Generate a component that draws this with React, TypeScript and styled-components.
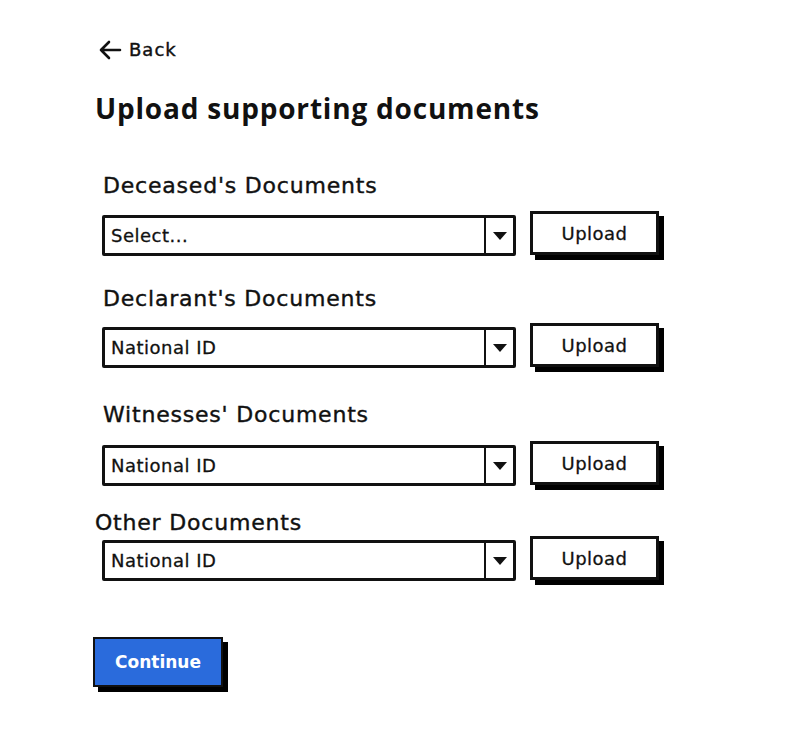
import styled, { createGlobalStyle } from "styled-components";

const GlobalStyle = createGlobalStyle`
  body {
    margin: 0;
    background: #ffffff;
    font-family: "DejaVu Sans", "Open Sans", sans-serif;
    color: #111111;
  }
`;

type DocSection = {
  label: string;
  value: string;
  top: number;
  gap: number;
  indent: number;
};

const SECTIONS: Array<DocSection> = [
  { label: "Deceased's Documents", value: "Select...", top: 50, gap: 13, indent: 10 },
  { label: "Declarant's Documents", value: "National ID", top: 32, gap: 12, indent: 10 },
  { label: "Witnesses' Documents", value: "National ID", top: 36, gap: 14, indent: 10 },
  { label: "Other Documents", value: "National ID", top: 26, gap: 1, indent: 2 },
];

const App = () => {
  return (
    <>
      <GlobalStyle />
      <Page>
        <BackLink>
          <svg width="24" height="20" viewBox="0 0 24 20" fill="none">
            <path
              d="M22 10H3M11 2L3 10L11 18"
              stroke="#111"
              strokeWidth="2.6"
              strokeLinecap="round"
              strokeLinejoin="round"
            />
          </svg>
          Back
        </BackLink>
        <Title>Upload supporting documents</Title>
        {SECTIONS.map((section, index) => (
          <Section key={index} top={section.top}>
            <Label indent={section.indent} gap={section.gap}>
              {section.label}
            </Label>
            <Row>
              <Select>
                <SelectValue>{section.value}</SelectValue>
                <Caret>
                  <svg width="14" height="8" viewBox="0 0 14 8">
                    <path d="M0 0H14L7 8Z" fill="#111" />
                  </svg>
                </Caret>
              </Select>
              <UploadButton>Upload</UploadButton>
            </Row>
          </Section>
        ))}
        <ContinueButton>Continue</ContinueButton>
      </Page>
    </>
  );
};

export default App;

const Page = styled.div`
  display: flex;
  flex-direction: column;
  align-items: flex-start;
  padding: 39px 0 60px 93px;
`;

const BackLink = styled.div`
  display: flex;
  align-items: center;
  gap: 7px;
  margin-left: 5px;
  font-size: 18px;
  line-height: 22px;
  letter-spacing: 1px;
  -webkit-text-stroke: 0.4px #111;
`;

const Title = styled.h1`
  margin: 31px 0 0 2px;
  font-family: "Open Sans", sans-serif;
  font-size: 28px;
  line-height: 32px;
  font-weight: 700;
  letter-spacing: 0.8px;
`;

const Section = styled.div<{ top: number }>`
  display: flex;
  flex-direction: column;
  margin-top: ${({ top }) => `${top}px`};
`;

const Label = styled.div<{ indent: number; gap: number }>`
  margin-left: ${({ indent }) => `${indent}px`};
  margin-bottom: ${({ gap }) => `${gap}px`};
  font-size: 22px;
  line-height: 24px;
  letter-spacing: 0.8px;
  -webkit-text-stroke: 0.4px #111;
`;

const Row = styled.div`
  display: flex;
  align-items: flex-start;
  gap: 14px;
  height: 44px;
  margin-left: 9px;
`;

const Select = styled.div`
  display: flex;
  align-items: stretch;
  box-sizing: border-box;
  width: 414px;
  height: 41px;
  margin-top: 4px;
  border: 3px solid #111;
  border-radius: 2px;
  background: #fff;
`;

const SelectValue = styled.div`
  flex: 1;
  display: flex;
  align-items: center;
  padding-left: 6px;
  font-size: 18px;
  letter-spacing: 0.5px;
  -webkit-text-stroke: 0.3px #111;
`;

const Caret = styled.div`
  display: flex;
  align-items: center;
  justify-content: center;
  width: 27px;
  border-left: 2px solid #111;
`;

const UploadButton = styled.div`
  display: flex;
  align-items: center;
  justify-content: center;
  box-sizing: border-box;
  width: 129px;
  height: 44px;
  border: 3px solid #111;
  background: #fff;
  box-shadow: 5px 5px 0 #000;
  font-size: 18px;
  letter-spacing: 0.5px;
  -webkit-text-stroke: 0.3px #111;
`;

const ContinueButton = styled.div`
  display: flex;
  align-items: center;
  justify-content: center;
  box-sizing: border-box;
  width: 130px;
  height: 50px;
  margin-top: 57px;
  border: 2px solid #111;
  background: #2a6bdc;
  box-shadow: 5px 5px 0 #000;
  color: #fff;
  font-size: 17px;
  font-weight: 700;
`;
